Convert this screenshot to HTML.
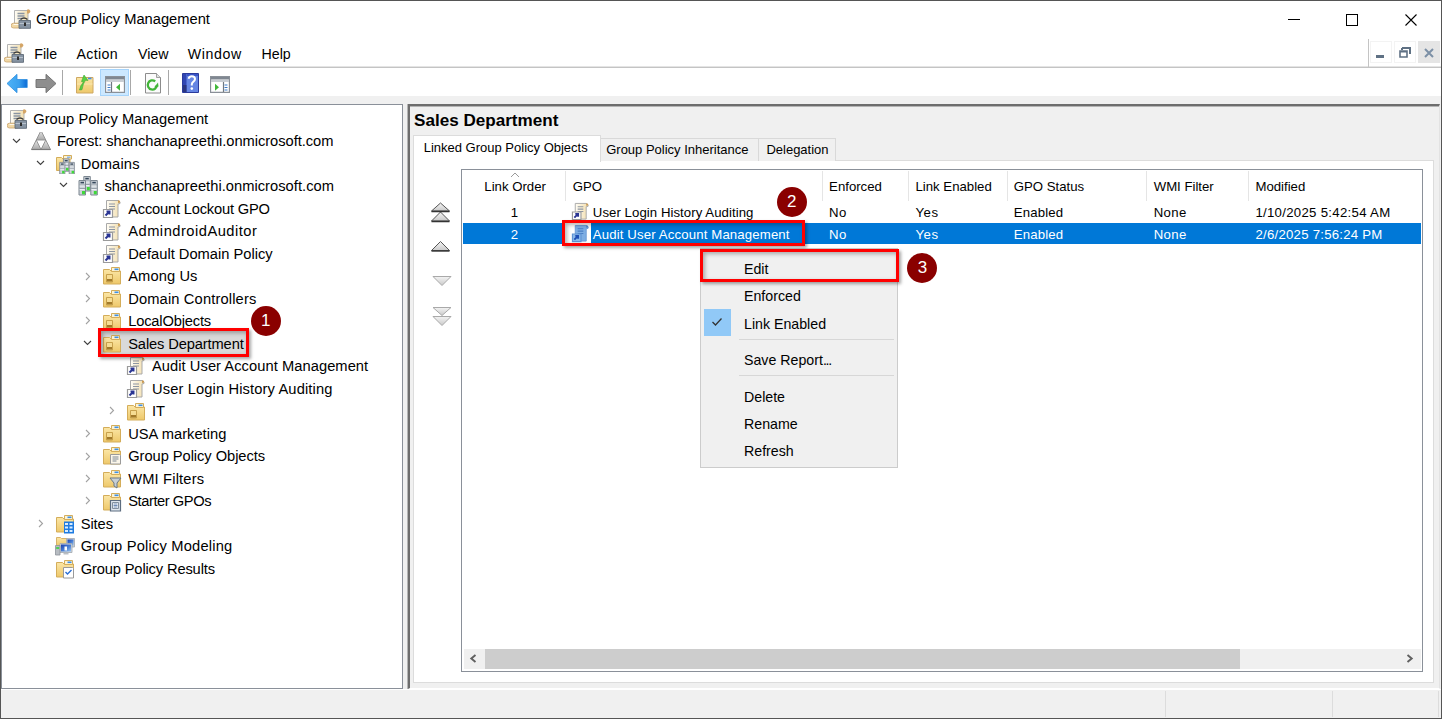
<!DOCTYPE html>
<html><head><meta charset="utf-8"><style>
html,body{margin:0;padding:0;}
body{width:1442px;height:719px;position:relative;overflow:hidden;background:#f0f0f0;font-family:"Liberation Sans", sans-serif;}
.t{position:absolute;white-space:nowrap;font-family:"Liberation Sans", sans-serif;}
.r{position:absolute;}
</style></head><body>

<svg width="0" height="0" style="position:absolute">
<defs>
 <linearGradient id="fold" x1="0" y1="0" x2="0" y2="1"><stop offset="0" stop-color="#fbe6a6"/><stop offset="1" stop-color="#eec86a"/></linearGradient>
 <linearGradient id="paper" x1="0" y1="0" x2="1" y2="0"><stop offset="0" stop-color="#fffdf6"/><stop offset="1" stop-color="#f3dfae"/></linearGradient>
 <g id="folder">
   <path d="M1.5 3.5h6l1.5 1.5h9.5v13h-17z" fill="url(#fold)" stroke="#d4ad5a" stroke-width="1"/>
   <path d="M9.5 1.5h8v4h-8z" fill="#fdf3d2" stroke="#d4ad5a" stroke-width="1"/>
   <path d="M12.5 2.5h4v1.6h-4z" fill="#3d8fe6"/>
 </g>
 <g id="ou">
   <use href="#folder"/>
   <path d="M4.5 8.5h6v7.5h-6z" fill="#f6dc92" stroke="#c29a45" stroke-width="0.9"/>
   <path d="M5 13h5v2.5h-5z" fill="#a27a2a"/>
 </g>
 <g id="scroll">
   <path d="M4.5 1.5h11.5l2 1.5v1.5l-2 0.5v13h-11.5z" fill="url(#paper)" stroke="#a9a9a9" stroke-width="1"/>
   <path d="M16 1.5a1.5 1.5 0 0 1 2 2l-2 0.5z" fill="#c99a55"/>
   <path d="M7 5h6M7 7.5h6M7 10h6" stroke="#8d96a3" stroke-width="1.2"/>
 </g>
 <g id="gpolink">
   <use href="#scroll"/>
   <path d="M1.5 10.5h9v8h-9z" fill="#fff" stroke="#9a9a9a" stroke-width="1.2"/>
   <path d="M3.5 16.5l4-4M4.5 12.5h3v3" stroke="#2a3593" stroke-width="2" fill="none"/>
 </g>
 <g id="gpolinksel">
   <path d="M4.5 1.5h11.5l2 1.5v1.5l-2 0.5v13h-11.5z" fill="#7eaee3" stroke="#6a9ad6" stroke-width="1"/>
   <path d="M16 1.5a1.5 1.5 0 0 1 2 2l-2 0.5z" fill="#4f86cf"/>
   <path d="M7 5h6M7 7.5h6M7 10h6" stroke="#4b7fc4" stroke-width="1.2"/>
   <path d="M1.5 10.5h9v8h-9z" fill="#8ab8ea" stroke="#5f93d3" stroke-width="1.2"/>
   <path d="M3.5 16.5l4-4M4.5 12.5h3v3" stroke="#1d4fb5" stroke-width="2" fill="none"/>
 </g>
 <g id="gpm">
   <path d="M3.5 1.5h13.5v13h-13.5z" fill="url(#paper)" stroke="#b3b3b3" stroke-width="1"/>
   <path d="M16 0.8a2 2 0 0 1 3.2 2.2l-1.2 1.5h-2z" fill="#d4a566"/>
   <path d="M6.5 4.5h7M6.5 7h7M6.5 9.5h5" stroke="#8a95a3" stroke-width="1.3"/>
   <path d="M2.5 14.2h8v4.8h-8a2.4 2.4 0 0 1 0-4.8z" fill="#f0d7a4" stroke="#c9a26a" stroke-width="0.8"/>
   <path d="M2.5 15.5h6" stroke="#fff8e8" stroke-width="1"/>
   <path d="M9.5 10.5q3.5-3 7 0" fill="none" stroke="#3a3a3a" stroke-width="1.4"/>
   <path d="M8 11.5h11.5v7.8h-11.5z" fill="#8794a3" stroke="#5f6b78" stroke-width="0.9"/>
   <path d="M8.5 14.5h10.5" stroke="#b7c1cc" stroke-width="1"/>
   <path d="M13 13.5h2v3.5h-2z" fill="#2e2e2e"/>
 </g>
 <linearGradient id="trig" x1="0" y1="0" x2="0" y2="1"><stop offset="0" stop-color="#e6e6e6"/><stop offset="1" stop-color="#a9a9a9"/></linearGradient>
 <g id="forest">
   <path d="M10 -1.5l4.75 9.5h-9.5z" fill="url(#trig)" stroke="#8c8c8c" stroke-width="0.9"/>
   <path d="M5.25 8l4.75 9.5h-9.5z" fill="url(#trig)" stroke="#8c8c8c" stroke-width="0.9"/>
   <path d="M14.75 8l4.75 9.5h-9.5z" fill="url(#trig)" stroke="#8c8c8c" stroke-width="0.9"/>
   <path d="M0.5 17.5h19" stroke="#7a7a7a" stroke-width="1.2"/>
 </g>
 <g id="tower">
   <path d="M0.5 0.5h6.5v14.5h-6.5z" fill="#cdd3d9" stroke="#7d8791" stroke-width="1"/>
   <path d="M2 1.8h3.5v1.6h-3.5z" fill="#34465a"/>
   <path d="M1 5h5.5M1 8.5h5.5" stroke="#8f98a2" stroke-width="0.9"/>
   <path d="M1.2 6h5M1.2 9.5h5" stroke="#eef1f4" stroke-width="1"/>
   <path d="M3.5 11h3v3.3h-3z" fill="#3fd83a"/>
 </g>
 <g id="servers">
   <use href="#tower" transform="translate(5.3,0)"/>
   <use href="#tower" transform="translate(0.5,4)"/>
   <use href="#tower" transform="translate(12.3,4)"/>
 </g>
 <g id="domains">
   <path d="M1.5 3.5h5l1.5 1.5h7v11.5h-13.5z" fill="url(#fold)" stroke="#d4ad5a" stroke-width="1"/>
   <path d="M8.5 1.5h8v3.5h-8z" fill="#fdf3d2" stroke="#d4ad5a" stroke-width="1"/>
   <path d="M12 2.5h3.5v1.5h-3.5z" fill="#8fb6e6"/>
   <use href="#tower" transform="translate(8,4.5) scale(0.85)"/>
   <use href="#tower" transform="translate(4.3,8) scale(0.8)"/>
   <use href="#tower" transform="translate(13.8,8) scale(0.8)"/>
 </g>
 <g id="gpofolder">
   <use href="#folder"/>
   <path d="M8.5 8.5h9l1 1v8.5h-10z" fill="#fbf6ea" stroke="#9a9a9a" stroke-width="1"/>
   <path d="M10.5 11h6M10.5 13h6M10.5 15h4" stroke="#7d8792" stroke-width="1"/>
 </g>
 <g id="wmi">
   <use href="#folder"/>
   <path d="M8 9h11l-4 5v5l-3-2v-3z" fill="#c7cfd6" stroke="#6b7884" stroke-width="1"/>
 </g>
 <g id="starter">
   <use href="#folder"/>
   <path d="M8.5 8.5h10v10.5h-10z" fill="#dfe6ee" stroke="#5d6d80" stroke-width="1.2"/>
   <path d="M10.5 10.5h6v6h-6z" fill="#fff" stroke="#8391a0" stroke-width="1"/>
   <path d="M11.5 12h4M11.5 13.5h4M11.5 15h4" stroke="#4a6fa5" stroke-width="0.8"/>
 </g>
 <g id="sites">
   <use href="#folder"/>
   <path d="M9 7.5h10v12h-10z" fill="#1e7be0"/>
   <path d="M10 9h3v2h-3zM14.5 9h3v2h-3zM10 12.5h3v2h-3zM14.5 12.5h3v2h-3zM10 16h3v2h-3zM14.5 16h3v2h-3z" fill="#d7ecff"/>
 </g>
 <linearGradient id="scr" x1="0" y1="0" x2="1" y2="1"><stop offset="0" stop-color="#1a3fb0"/><stop offset="0.6" stop-color="#4f86d8"/><stop offset="1" stop-color="#9cc6f0"/></linearGradient>
 <g id="modeling">
   <path d="M1.5 1.5h4l1 1h5.5v7h-10.5z" fill="url(#fold)" stroke="#d8b36a" stroke-width="1"/>
   <path d="M11.5 2.5h8v8.5h-8z" fill="#c9ced4" stroke="#a4abb3" stroke-width="0.8"/>
   <path d="M12.5 3.5h6v6h-6z" fill="url(#scr)"/>
   <path d="M5 7.5h12v9h-12z" fill="#d5d9de" stroke="#a0a7af" stroke-width="0.8"/>
   <path d="M6 8.5h10v7h-10z" fill="url(#scr)"/>
   <path d="M9.5 10.5h2.5v4h-2.5z" fill="#fff"/>
   <path d="M8.5 17h5v1.5h-5z" fill="#b9bec4"/>
   <path d="M0.5 9.5h4.5v9.5h-4.5z" fill="#b7bcc2" stroke="#8d939a" stroke-width="0.8"/>
   <path d="M1.2 11.2h3v1.6h-3z" fill="#35d43a"/>
 </g>
 <g id="results">
   <use href="#folder"/>
   <path d="M8.5 8.5h9l1 1v9.5h-10z" fill="#fff" stroke="#9a9a9a" stroke-width="1"/>
   <path d="M10.5 13l2 2 4-4" stroke="#2b6fd6" stroke-width="1.4" fill="none"/>
 </g>
</defs></svg>

<div class="r" style="left:0px;top:0px;width:1442px;height:38px;background:#fff;"></div><svg class="r" style="left:11px;top:9px" width="20" height="20" viewBox="0 0 20 20"><use href="#gpm"/></svg><div class="t" style="left:36.00px;top:12.36px;font-size:14.7px;line-height:14.7px;color:#000;">Group Policy Management</div><div class="r" style="left:1288px;top:19px;width:12px;height:1px;background:#000;"></div><div class="r" style="left:1346px;top:14px;width:12px;height:12px;border:1px solid #000;box-sizing:border-box;"></div><svg class="r" style="left:1405px;top:14px" width="12" height="12" viewBox="0 0 12 12"><path d="M0.5 0.5l11 11M11.5 0.5l-11 11" stroke="#000" stroke-width="1.1"/></svg><div class="r" style="left:0px;top:38px;width:1442px;height:29px;background:#fff;"></div><svg class="r" style="left:4px;top:43px" width="20" height="20" viewBox="0 0 20 20"><use href="#gpm"/></svg><div class="t" style="left:34.30px;top:46.88px;font-size:14.2px;line-height:14.2px;color:#000;">File</div><div class="t" style="left:76.50px;top:46.88px;font-size:14.2px;line-height:14.2px;color:#000;letter-spacing:0.35px;">Action</div><div class="t" style="left:138.00px;top:46.88px;font-size:14.2px;line-height:14.2px;color:#000;">View</div><div class="t" style="left:187.70px;top:46.88px;font-size:14.2px;line-height:14.2px;color:#000;letter-spacing:0.6px;">Window</div><div class="t" style="left:261.50px;top:46.88px;font-size:14.2px;line-height:14.2px;color:#000;">Help</div><div class="r" style="left:0px;top:66px;width:1368px;height:1px;background:#e4e4e4;"></div><div class="r" style="left:0px;top:67px;width:1368px;height:1px;background:#c4c4c4;"></div><div class="r" style="left:1368px;top:39px;width:1px;height:29px;background:#c4c4c4;"></div><div class="r" style="left:1369px;top:39px;width:72px;height:28px;background:#fff;"></div><div class="r" style="left:1370px;top:41px;width:22px;height:22px;background:#fff;border:1px solid #f3f3f3;box-sizing:border-box;"></div><div class="r" style="left:1394px;top:41px;width:22px;height:22px;background:#fff;border:1px solid #f3f3f3;box-sizing:border-box;"></div><div class="r" style="left:1418px;top:41px;width:22px;height:22px;background:#e5e5e5;"></div><div class="r" style="left:1376px;top:55px;width:8px;height:3px;background:#5f7184;"></div><svg class="r" style="left:1399px;top:47px" width="12" height="11" viewBox="0 0 12 11"><path d="M3 1h8v6M3 1v2" fill="none" stroke="#5f7184" stroke-width="2"/><path d="M1 4h7v6h-7z" fill="none" stroke="#5f7184" stroke-width="1.6"/><path d="M1 4h7v1.5h-7z" fill="#5f7184"/></svg><svg class="r" style="left:1424px;top:48px" width="10" height="10" viewBox="0 0 10 10"><path d="M1 1l8 8M9 1l-8 8" stroke="#7c90a6" stroke-width="2"/></svg><div class="r" style="left:1369px;top:66px;width:72px;height:1px;background:#e4e4e4;"></div><div class="r" style="left:1369px;top:67px;width:72px;height:1px;background:#c4c4c4;"></div><div class="r" style="left:0px;top:68px;width:1442px;height:28px;background:#fff;"></div><div class="r" style="left:0;top:0;width:1px;height:719px;background:#555;"></div><div class="r" style="left:1441px;top:0px;width:1px;height:719px;background:#555;"></div><div class="r" style="left:0px;top:0px;width:1442px;height:1px;background:#555;"></div><div class="r" style="left:0px;top:718px;width:1442px;height:1px;background:#555;"></div><svg class="r" style="left:6px;top:73px" width="22" height="20" viewBox="0 0 22 20"><defs><linearGradient id="bk" x1="0" y1="0" x2="1" y2="0"><stop offset="0" stop-color="#4fb3f6"/><stop offset="0.6" stop-color="#3aa0ee"/><stop offset="1" stop-color="#0a6ad6"/></linearGradient></defs><path d="M1 10.5l10-9.2v5.2h10.2v8h-10.2v5.2z" fill="url(#bk)" stroke="#2d8ee0" stroke-width="0.8"/></svg><svg class="r" style="left:35px;top:73px" width="22" height="20" viewBox="0 0 22 20"><path d="M21 10.5l-10-9.2v5.2h-10v8h10v5.2z" fill="#8e8e8e" stroke="#6e6e6e" stroke-width="0.9"/></svg><div class="r" style="left:62px;top:70px;width:1px;height:25px;background:#a8a8a8;"></div><svg class="r" style="left:75px;top:73px" width="20" height="21" viewBox="0 0 20 21"><path d="M1.5 4.5h16.5v15.5h-16.5z" fill="url(#fold)" stroke="#cfa862" stroke-width="1"/><path d="M2 11h15.5" stroke="#fbe7b0" stroke-width="1"/><path d="M13 5.5h3.5" stroke="#4a90e2" stroke-width="1.6"/><path d="M4.5 17q1-5 4-8l-2-0.5 2.5-6.5 4 5.5-2.5-0.3q-2.5 3-3.5 9.5z" fill="#59cf45" stroke="#3da72f" stroke-width="0.6"/></svg><div class="r" style="left:100px;top:69px;width:29px;height:27px;background:#cce8ff;border:1px solid #a6d4fb;box-sizing:border-box;"></div><svg class="r" style="left:105px;top:76px" width="20" height="17" viewBox="0 0 20 17"><path d="M0.5 0.5h19v16h-19z" fill="#fff" stroke="#8a9098" stroke-width="1.3"/><path d="M1 1h18v2.5h-18z" fill="#7f8791"/><path d="M1 4h18v2h-18z" fill="#c9ced4"/><path d="M6.5 6v10" stroke="#6f7780" stroke-width="1.2"/><path d="M2.5 9h3M2.5 11.5h3M2.5 14h3" stroke="#3d7cc9" stroke-width="1.1"/><path d="M11 11.2l4-3.5v7z" fill="#41b83a"/></svg><div class="r" style="left:130px;top:70px;width:1px;height:25px;background:#a8a8a8;"></div><svg class="r" style="left:144px;top:73px" width="18" height="21" viewBox="0 0 18 21"><path d="M1.5 0.5h11l4 4v15.5h-15z" fill="#fbfbfb" stroke="#8c8c8c" stroke-width="1"/><path d="M12.5 0.5v4h4" fill="#e0e0e0" stroke="#8c8c8c" stroke-width="0.8"/><path d="M13 12a4.6 4.6 0 1 1-1.8-3.7" fill="none" stroke="#43b539" stroke-width="2.3"/><path d="M14.5 13.5l-4.5 1 4-5z" fill="#43b539"/></svg><div class="r" style="left:168px;top:70px;width:1px;height:25px;background:#a8a8a8;"></div><svg class="r" style="left:182px;top:73px" width="17" height="20" viewBox="0 0 17 20"><path d="M0.5 0.5h16v19h-16z" fill="#6585e3" stroke="#2a3a9c" stroke-width="1"/><path d="M1 1h3.5v18h-3.5z" fill="#3146b3"/><path d="M1 12h3.5v7h-3.5z" fill="#2a357f"/><path d="M5 1h11v2h-11z" fill="#3a56c8"/><path d="M6.8 5.8q0-2.6 3-2.6 3.2 0 3.2 2.8 0 1.8-1.8 2.8-1.4 0.8-1.4 2.6v1" fill="none" stroke="#fff" stroke-width="2"/><circle cx="9.8" cy="15.6" r="1.3" fill="#fff"/></svg><svg class="r" style="left:210px;top:76px" width="20" height="17" viewBox="0 0 20 17"><path d="M0.5 0.5h19v16h-19z" fill="#fff" stroke="#8a9098" stroke-width="1.3"/><path d="M1 1h18v2.5h-18z" fill="#7f8791"/><path d="M1 4h18v2h-18z" fill="#c9ced4"/><path d="M13.5 6v10" stroke="#6f7780" stroke-width="1.2"/><path d="M14.5 9h3M14.5 11.5h3M14.5 14h3" stroke="#3d7cc9" stroke-width="1.1"/><path d="M5 7.7l4 3.5-4 3.5z" fill="#41b83a"/></svg><div class="r" style="left:1px;top:104px;width:402px;height:585px;background:#fff;border:1px solid #8a9099;box-sizing:border-box;"></div><div class="r" style="left:408px;top:104px;width:1032px;height:585px;background:#f0f0f0;border-top:2px solid #6d6d6d;border-left:2px solid #6d6d6d;border-right:1px solid #e3e3e3;border-bottom:1px solid #fff;box-sizing:border-box;box-shadow:-1px 0 0 #b4b4b4, inset 0 1px 0 #b4b4b4;"></div><div class="r" style="left:1px;top:689px;width:1440px;height:1px;background:#fff;"></div><div class="r" style="left:1165px;top:691px;width:1px;height:26px;background:#dcdcdc;"></div><div class="r" style="left:1332px;top:691px;width:1px;height:26px;background:#dcdcdc;"></div><div class="r" style="left:1438px;top:691px;width:1px;height:26px;background:#dcdcdc;"></div><svg class="r" style="left:7px;top:109px" width="20" height="20" viewBox="0 0 20 20"><use href="#gpm"/></svg><div class="t" style="left:33.20px;top:111.56px;font-size:14.7px;line-height:14.7px;color:#000;letter-spacing:0.05px;">Group Policy Management</div><svg class="r" style="left:31px;top:132px" width="20" height="20" viewBox="0 0 20 20"><use href="#forest"/></svg><svg class="r" style="left:12px;top:138px" width="9" height="6" viewBox="0 0 9 6"><path d="M1 1l3.5 3.5 3.5-3.5" fill="none" stroke="#404040" stroke-width="1.1"/></svg><div class="t" style="left:56.95px;top:134.06px;font-size:14.7px;line-height:14.7px;color:#000;letter-spacing:-0.05px;">Forest: shanchanapreethi.onmicrosoft.com</div><svg class="r" style="left:55px;top:154px" width="20" height="20" viewBox="0 0 20 20"><use href="#domains"/></svg><svg class="r" style="left:36px;top:160px" width="9" height="6" viewBox="0 0 9 6"><path d="M1 1l3.5 3.5 3.5-3.5" fill="none" stroke="#404040" stroke-width="1.1"/></svg><div class="t" style="left:80.70px;top:156.56px;font-size:14.7px;line-height:14.7px;color:#000;letter-spacing:0.14px;">Domains</div><svg class="r" style="left:78px;top:176px" width="20" height="20" viewBox="0 0 20 20"><use href="#servers"/></svg><svg class="r" style="left:59px;top:182px" width="9" height="6" viewBox="0 0 9 6"><path d="M1 1l3.5 3.5 3.5-3.5" fill="none" stroke="#404040" stroke-width="1.1"/></svg><div class="t" style="left:104.45px;top:179.06px;font-size:14.7px;line-height:14.7px;color:#000;letter-spacing:0.029px;">shanchanapreethi.onmicrosoft.com</div><svg class="r" style="left:102px;top:199px" width="20" height="20" viewBox="0 0 20 20"><use href="#gpolink"/></svg><div class="t" style="left:128.20px;top:201.56px;font-size:14.7px;line-height:14.7px;color:#000;letter-spacing:-0.2px;">Account Lockout GPO</div><svg class="r" style="left:102px;top:222px" width="20" height="20" viewBox="0 0 20 20"><use href="#gpolink"/></svg><div class="t" style="left:128.20px;top:224.06px;font-size:14.7px;line-height:14.7px;color:#000;letter-spacing:0.494px;">AdmindroidAuditor</div><svg class="r" style="left:102px;top:244px" width="20" height="20" viewBox="0 0 20 20"><use href="#gpolink"/></svg><div class="t" style="left:128.20px;top:246.56px;font-size:14.7px;line-height:14.7px;color:#000;">Default Domain Policy</div><svg class="r" style="left:102px;top:266px" width="20" height="20" viewBox="0 0 20 20"><use href="#ou"/></svg><svg class="r" style="left:85px;top:272px" width="6" height="9" viewBox="0 0 6 9"><path d="M1 1l3.5 3.5-3.5 3.5" fill="none" stroke="#a2a2a2" stroke-width="1.1"/></svg><div class="t" style="left:128.20px;top:269.06px;font-size:14.7px;line-height:14.7px;color:#000;letter-spacing:0.1px;">Among Us</div><svg class="r" style="left:102px;top:289px" width="20" height="20" viewBox="0 0 20 20"><use href="#ou"/></svg><svg class="r" style="left:85px;top:294px" width="6" height="9" viewBox="0 0 6 9"><path d="M1 1l3.5 3.5-3.5 3.5" fill="none" stroke="#a2a2a2" stroke-width="1.1"/></svg><div class="t" style="left:128.20px;top:291.56px;font-size:14.7px;line-height:14.7px;color:#000;letter-spacing:0.14px;">Domain Controllers</div><svg class="r" style="left:102px;top:312px" width="20" height="20" viewBox="0 0 20 20"><use href="#ou"/></svg><svg class="r" style="left:85px;top:316px" width="6" height="9" viewBox="0 0 6 9"><path d="M1 1l3.5 3.5-3.5 3.5" fill="none" stroke="#a2a2a2" stroke-width="1.1"/></svg><div class="t" style="left:128.20px;top:314.06px;font-size:14.7px;line-height:14.7px;color:#000;letter-spacing:-0.173px;">LocalObjects</div><div class="r" style="left:100px;top:331px;width:147px;height:23px;background:#d9d9d9;"></div><svg class="r" style="left:102px;top:334px" width="20" height="20" viewBox="0 0 20 20"><use href="#ou"/></svg><svg class="r" style="left:83px;top:340px" width="9" height="6" viewBox="0 0 9 6"><path d="M1 1l3.5 3.5 3.5-3.5" fill="none" stroke="#404040" stroke-width="1.1"/></svg><div class="t" style="left:128.20px;top:336.56px;font-size:14.7px;line-height:14.7px;color:#000;letter-spacing:-0.133px;">Sales Department</div><svg class="r" style="left:126px;top:356px" width="20" height="20" viewBox="0 0 20 20"><use href="#gpolink"/></svg><div class="t" style="left:151.95px;top:359.06px;font-size:14.7px;line-height:14.7px;color:#000;letter-spacing:0.054px;">Audit User Account Management</div><svg class="r" style="left:126px;top:379px" width="20" height="20" viewBox="0 0 20 20"><use href="#gpolink"/></svg><div class="t" style="left:151.95px;top:381.56px;font-size:14.7px;line-height:14.7px;color:#000;letter-spacing:0.127px;">User Login History Auditing</div><svg class="r" style="left:126px;top:402px" width="20" height="20" viewBox="0 0 20 20"><use href="#ou"/></svg><svg class="r" style="left:109px;top:406px" width="6" height="9" viewBox="0 0 6 9"><path d="M1 1l3.5 3.5-3.5 3.5" fill="none" stroke="#a2a2a2" stroke-width="1.1"/></svg><div class="t" style="left:151.95px;top:404.06px;font-size:14.7px;line-height:14.7px;color:#000;letter-spacing:0.1px;">IT</div><svg class="r" style="left:102px;top:424px" width="20" height="20" viewBox="0 0 20 20"><use href="#ou"/></svg><svg class="r" style="left:85px;top:429px" width="6" height="9" viewBox="0 0 6 9"><path d="M1 1l3.5 3.5-3.5 3.5" fill="none" stroke="#a2a2a2" stroke-width="1.1"/></svg><div class="t" style="left:128.20px;top:426.56px;font-size:14.7px;line-height:14.7px;color:#000;letter-spacing:0.017px;">USA marketing</div><svg class="r" style="left:102px;top:446px" width="20" height="20" viewBox="0 0 20 20"><use href="#gpofolder"/></svg><svg class="r" style="left:85px;top:452px" width="6" height="9" viewBox="0 0 6 9"><path d="M1 1l3.5 3.5-3.5 3.5" fill="none" stroke="#a2a2a2" stroke-width="1.1"/></svg><div class="t" style="left:128.20px;top:449.06px;font-size:14.7px;line-height:14.7px;color:#000;letter-spacing:-0.053px;">Group Policy Objects</div><svg class="r" style="left:102px;top:469px" width="20" height="20" viewBox="0 0 20 20"><use href="#wmi"/></svg><svg class="r" style="left:85px;top:474px" width="6" height="9" viewBox="0 0 6 9"><path d="M1 1l3.5 3.5-3.5 3.5" fill="none" stroke="#a2a2a2" stroke-width="1.1"/></svg><div class="t" style="left:128.20px;top:471.56px;font-size:14.7px;line-height:14.7px;color:#000;letter-spacing:0.16px;">WMI Filters</div><svg class="r" style="left:102px;top:492px" width="20" height="20" viewBox="0 0 20 20"><use href="#starter"/></svg><svg class="r" style="left:85px;top:496px" width="6" height="9" viewBox="0 0 6 9"><path d="M1 1l3.5 3.5-3.5 3.5" fill="none" stroke="#a2a2a2" stroke-width="1.1"/></svg><div class="t" style="left:128.20px;top:494.06px;font-size:14.7px;line-height:14.7px;color:#000;letter-spacing:-0.436px;">Starter GPOs</div><svg class="r" style="left:55px;top:514px" width="20" height="20" viewBox="0 0 20 20"><use href="#sites"/></svg><svg class="r" style="left:38px;top:519px" width="6" height="9" viewBox="0 0 6 9"><path d="M1 1l3.5 3.5-3.5 3.5" fill="none" stroke="#a2a2a2" stroke-width="1.1"/></svg><div class="t" style="left:80.70px;top:516.56px;font-size:14.7px;line-height:14.7px;color:#000;letter-spacing:-0.075px;">Sites</div><svg class="r" style="left:55px;top:536px" width="20" height="20" viewBox="0 0 20 20"><use href="#modeling"/></svg><div class="t" style="left:80.70px;top:539.06px;font-size:14.7px;line-height:14.7px;color:#000;letter-spacing:0.19px;">Group Policy Modeling</div><svg class="r" style="left:55px;top:559px" width="20" height="20" viewBox="0 0 20 20"><use href="#results"/></svg><div class="t" style="left:80.70px;top:561.56px;font-size:14.7px;line-height:14.7px;color:#000;letter-spacing:-0.147px;">Group Policy Results</div><div class="t" style="left:414.00px;top:111.82px;font-size:17.1px;line-height:17.1px;color:#000;font-weight:700;">Sales Department</div><div class="r" style="left:413px;top:160px;width:1021px;height:523px;background:#fff;border:1px solid #dcdcdc;box-sizing:border-box;"></div><div class="r" style="left:600px;top:138px;width:159px;height:23px;background:#f0f0f0;border:1px solid #d9d9d9;border-bottom:none;box-sizing:border-box;"></div><div class="r" style="left:758px;top:138px;width:78px;height:23px;background:#f0f0f0;border:1px solid #d9d9d9;border-bottom:none;box-sizing:border-box;"></div><div class="r" style="left:413px;top:135px;width:188px;height:27px;background:#fff;border:1px solid #dcdcdc;border-bottom:none;box-sizing:border-box;"></div><div class="t" style="left:423.70px;top:141.00px;font-size:13px;line-height:13px;color:#000;">Linked Group Policy Objects</div><div class="t" style="left:606.20px;top:143.20px;font-size:13px;line-height:13px;color:#000;">Group Policy Inheritance</div><div class="t" style="left:766.40px;top:143.20px;font-size:13px;line-height:13px;color:#000;">Delegation</div><svg class="r" style="left:430px;top:202px" width="21" height="21" viewBox="0 0 21 21"><defs><linearGradient id="tri" x1="0" y1="0" x2="0" y2="1"><stop offset="0" stop-color="#f4f4f4"/><stop offset="1" stop-color="#c9c9c9"/></linearGradient></defs><path d="M10.5 1l9 8h-18z" fill="url(#tri)" stroke="#555" stroke-width="1"/><path d="M10.5 10l9 9h-18z" fill="url(#tri)" stroke="#555" stroke-width="1"/><path d="M1.5 19.5h18M1.5 9.5h18" stroke="#333" stroke-width="1.4"/></svg><svg class="r" style="left:430px;top:240px" width="21" height="13" viewBox="0 0 21 13"><path d="M10.5 1.5l9 9h-18z" fill="url(#tri)" stroke="#555" stroke-width="1"/><path d="M1.5 11h18" stroke="#333" stroke-width="1.4"/></svg><svg class="r" style="left:432px;top:275px" width="20" height="12" viewBox="0 0 20 12"><path d="M1 1.5h18l-9 9z" fill="url(#tri)" stroke="#a9a9a9" stroke-width="1"/></svg><svg class="r" style="left:432px;top:306px" width="20" height="21" viewBox="0 0 20 21"><path d="M1 1.5h18l-9 8z" fill="url(#tri)" stroke="#a9a9a9" stroke-width="1"/><path d="M1 10.5h18l-9 9z" fill="url(#tri)" stroke="#a9a9a9" stroke-width="1"/></svg><div class="r" style="left:461px;top:169px;width:962px;height:503px;background:#fff;border:1px solid #8a9099;box-sizing:border-box;"></div><div class="r" style="left:565px;top:171px;width:1px;height:30px;background:#e5e5e5;"></div><div class="r" style="left:822px;top:171px;width:1px;height:30px;background:#e5e5e5;"></div><div class="r" style="left:908px;top:171px;width:1px;height:30px;background:#e5e5e5;"></div><div class="r" style="left:1007px;top:171px;width:1px;height:30px;background:#e5e5e5;"></div><div class="r" style="left:1146px;top:171px;width:1px;height:30px;background:#e5e5e5;"></div><div class="r" style="left:1248px;top:171px;width:1px;height:30px;background:#e5e5e5;"></div><svg class="r" style="left:510px;top:172px" width="10" height="6" viewBox="0 0 10 6"><path d="M1 5l4-4 4 4" fill="none" stroke="#9a9a9a" stroke-width="1"/></svg><div class="t" style="left:484.30px;top:179.63px;font-size:13.2px;line-height:13.2px;color:#000;">Link Order</div><div class="t" style="left:572.80px;top:179.63px;font-size:13.2px;line-height:13.2px;color:#000;">GPO</div><div class="t" style="left:829.10px;top:179.63px;font-size:13.2px;line-height:13.2px;color:#000;">Enforced</div><div class="t" style="left:915.50px;top:179.63px;font-size:13.2px;line-height:13.2px;color:#000;">Link Enabled</div><div class="t" style="left:1013.80px;top:179.63px;font-size:13.2px;line-height:13.2px;color:#000;">GPO Status</div><div class="t" style="left:1153.70px;top:179.63px;font-size:13.2px;line-height:13.2px;color:#000;">WMI Filter</div><div class="t" style="left:1255.40px;top:179.63px;font-size:13.2px;line-height:13.2px;color:#000;">Modified</div><div class="r" style="left:463px;top:223px;width:958px;height:21px;background:#0078d7;"></div><svg class="r" style="left:571px;top:202px" width="19" height="19" viewBox="0 0 20 20"><use href="#gpolink"/></svg><div class="t" style="left:510.80px;top:205.83px;font-size:13.2px;line-height:13.2px;color:#000;">1</div><div class="t" style="left:592.80px;top:205.83px;font-size:13.2px;line-height:13.2px;color:#000;letter-spacing:0.06px;">User Login History Auditing</div><div class="t" style="left:829.10px;top:205.83px;font-size:13.2px;line-height:13.2px;color:#000;letter-spacing:0.5px;">No</div><div class="t" style="left:915.50px;top:205.83px;font-size:13.2px;line-height:13.2px;color:#000;letter-spacing:0.5px;">Yes</div><div class="t" style="left:1013.80px;top:205.83px;font-size:13.2px;line-height:13.2px;color:#000;letter-spacing:0.15px;">Enabled</div><div class="t" style="left:1153.70px;top:205.83px;font-size:13.2px;line-height:13.2px;color:#000;letter-spacing:0.4px;">None</div><div class="t" style="left:1255.40px;top:205.83px;font-size:13.2px;line-height:13.2px;color:#000;letter-spacing:0.3px;">1/10/2025 5:42:54 AM</div><div class="r" style="left:565px;top:223px;width:26px;height:21px;background:#fff;"></div><svg class="r" style="left:571px;top:224px" width="19" height="19" viewBox="0 0 20 20"><use href="#gpolinksel"/></svg><div class="t" style="left:510.80px;top:227.53px;font-size:13.2px;line-height:13.2px;color:#fff;">2</div><div class="t" style="left:592.80px;top:227.53px;font-size:13.2px;line-height:13.2px;color:#fff;letter-spacing:0.14px;">Audit User Account Management</div><div class="t" style="left:829.10px;top:227.53px;font-size:13.2px;line-height:13.2px;color:#fff;letter-spacing:0.5px;">No</div><div class="t" style="left:915.50px;top:227.53px;font-size:13.2px;line-height:13.2px;color:#fff;letter-spacing:0.5px;">Yes</div><div class="t" style="left:1013.80px;top:227.53px;font-size:13.2px;line-height:13.2px;color:#fff;letter-spacing:0.15px;">Enabled</div><div class="t" style="left:1153.70px;top:227.53px;font-size:13.2px;line-height:13.2px;color:#fff;letter-spacing:0.4px;">None</div><div class="t" style="left:1255.40px;top:227.53px;font-size:13.2px;line-height:13.2px;color:#fff;letter-spacing:0.25px;">2/6/2025 7:56:24 PM</div><div class="r" style="left:464px;top:649px;width:957px;height:20px;background:#f0f0f0;"></div><div class="r" style="left:485px;top:649px;width:755px;height:20px;background:#cdcdcd;"></div><svg class="r" style="left:469px;top:654px" width="9" height="9" viewBox="0 0 9 9"><path d="M6.5 1l-4.2 3.5 4.2 3.5" fill="none" stroke="#606060" stroke-width="1.9"/></svg><svg class="r" style="left:1405px;top:654px" width="9" height="9" viewBox="0 0 9 9"><path d="M2.5 1l4.2 3.5-4.2 3.5" fill="none" stroke="#606060" stroke-width="1.9"/></svg><div class="r" style="left:700px;top:248px;width:198px;height:220px;background:#f0f0f0;border:1px solid #cccccc;box-sizing:border-box;"></div><div class="r" style="left:704px;top:309px;width:27px;height:27px;background:#91c9f7;"></div><svg class="r" style="left:711px;top:317px" width="12" height="10" viewBox="0 0 12 10"><path d="M1.5 5l3 3 6-6.5" fill="none" stroke="#333" stroke-width="1.3"/></svg><div class="r" style="left:739px;top:339px;width:155px;height:1px;background:#d7d7d7;"></div><div class="r" style="left:739px;top:375px;width:155px;height:1px;background:#d7d7d7;"></div><div class="t" style="left:744.00px;top:261.88px;font-size:14.2px;line-height:14.2px;color:#000;">Edit</div><div class="t" style="left:744.00px;top:289.48px;font-size:14.2px;line-height:14.2px;color:#000;">Enforced</div><div class="t" style="left:744.00px;top:316.88px;font-size:14.2px;line-height:14.2px;color:#000;">Link Enabled</div><div class="t" style="left:744.00px;top:353.18px;font-size:14.2px;line-height:14.2px;color:#000;">Save Report<span style="letter-spacing:-1.3px">...</span></div><div class="t" style="left:744.00px;top:389.68px;font-size:14.2px;line-height:14.2px;color:#000;">Delete</div><div class="t" style="left:744.00px;top:417.18px;font-size:14.2px;line-height:14.2px;color:#000;">Rename</div><div class="t" style="left:744.00px;top:444.38px;font-size:14.2px;line-height:14.2px;color:#000;">Refresh</div><div class="r" style="left:98px;top:328px;width:151px;height:29px;border:3px solid #ff0000;box-sizing:border-box;box-shadow:2px 2px 3px rgba(0,0,0,0.35), inset 2px 2px 4px rgba(0,0,0,0.3);"></div><div class="r" style="left:562px;top:220px;width:243px;height:26px;border:3px solid #ff0000;box-sizing:border-box;box-shadow:2px 2px 3px rgba(0,0,0,0.35), inset 2px 2px 4px rgba(0,0,0,0.3);"></div><div class="r" style="left:700px;top:249px;width:199px;height:33px;border:3px solid #ff0000;box-sizing:border-box;box-shadow:2px 2px 3px rgba(0,0,0,0.35), inset 2px 2px 4px rgba(0,0,0,0.3);"></div><div class="r" style="left:250.60000000000002px;top:305.6px;width:30px;height:30px;border-radius:50%;background:#8a0000;"></div><div class="t" style="left:261.00px;top:312.21px;font-size:17px;line-height:17px;color:#fff;">1</div><div class="r" style="left:776.7px;top:186.5px;width:30px;height:30px;border-radius:50%;background:#8a0000;"></div><div class="t" style="left:787.10px;top:193.11px;font-size:17px;line-height:17px;color:#fff;">2</div><div class="r" style="left:907.4px;top:252.7px;width:30px;height:30px;border-radius:50%;background:#8a0000;"></div><div class="t" style="left:917.80px;top:259.31px;font-size:17px;line-height:17px;color:#fff;">3</div>
</body></html>
